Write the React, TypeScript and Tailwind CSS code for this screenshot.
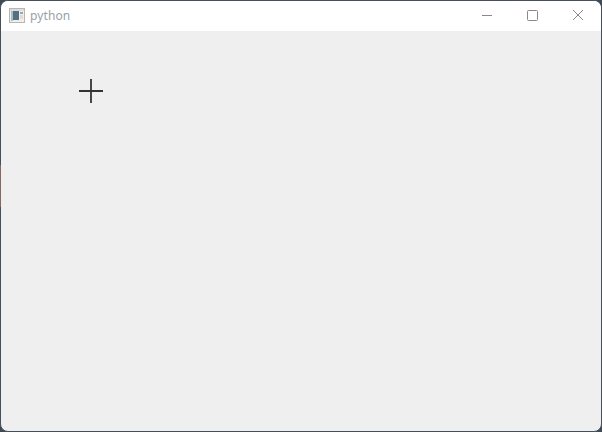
export default function App() {
  return (
    <div className="relative w-[602px] h-[432px] bg-[#3f4a57] overflow-hidden" style={{ fontFamily: '"Noto Sans", "Liberation Sans", sans-serif' }}>
      <div className="w-full h-full border border-[#46505c] rounded-[8px] overflow-hidden flex flex-col bg-[#efefef]">
        {/* title bar */}
        <div className="h-[30px] shrink-0 bg-white flex items-center pl-2">
          <svg width="16" height="15" viewBox="0 0 16 15" className="shrink-0 -translate-y-px">
            <rect x="0.5" y="0.5" width="15" height="14" fill="#f1eeeb" stroke="#b9b5b3" />
            <rect x="1" y="1" width="14" height="2" fill="#dcdcdf" />
            <rect x="2" y="3" width="2" height="10" fill="#a9bcc6" />
            <rect x="4" y="3" width="6" height="9" fill="#55707f" />
            <rect x="11" y="4" width="3" height="2" fill="#8fa9b5" />
            <rect x="11" y="7" width="3" height="4" fill="#e2dbd2" />
          </svg>
          <span className="ml-[5px] text-[12px] leading-none tracking-[0.1px] text-[#99a1a6]">python</span>
          <div className="ml-auto flex items-center text-[#8f8688]">
            <div className="w-[46px] h-[30px] flex items-center justify-center pb-[2px] pl-[2px]">
              <svg width="10" height="11" viewBox="0 0 10 11"><path d="M0 5.5H10" stroke="currentColor" fill="none" /></svg>
            </div>
            <div className="w-[46px] h-[30px] flex items-center justify-center pb-[2px]">
              <svg width="11" height="11" viewBox="0 0 11 11"><rect x="0.5" y="0.5" width="10" height="10" rx="1" stroke="currentColor" fill="none" /></svg>
            </div>
            <div className="w-[46px] h-[30px] flex items-center justify-center pb-[2px]">
              <svg width="12" height="12" viewBox="0 0 12 12"><path d="M1 1L11 11M11 1L1 11" stroke="currentColor" fill="none" /></svg>
            </div>
          </div>
        </div>
        {/* canvas */}
        <div className="flex-1 pl-[78px] pt-[48px]">
          <svg width="24" height="24" viewBox="0 0 24 24" className="block">
            <path d="M12 0V24M0 12H24" stroke="#333335" strokeWidth="1.8" fill="none" />
          </svg>
        </div>
      </div>
      {/* desktop colour showing through the left window edge */}
      <div className="absolute left-0 top-[165px] w-px h-[42px] bg-[#86685f]" />
    </div>
  );
}
